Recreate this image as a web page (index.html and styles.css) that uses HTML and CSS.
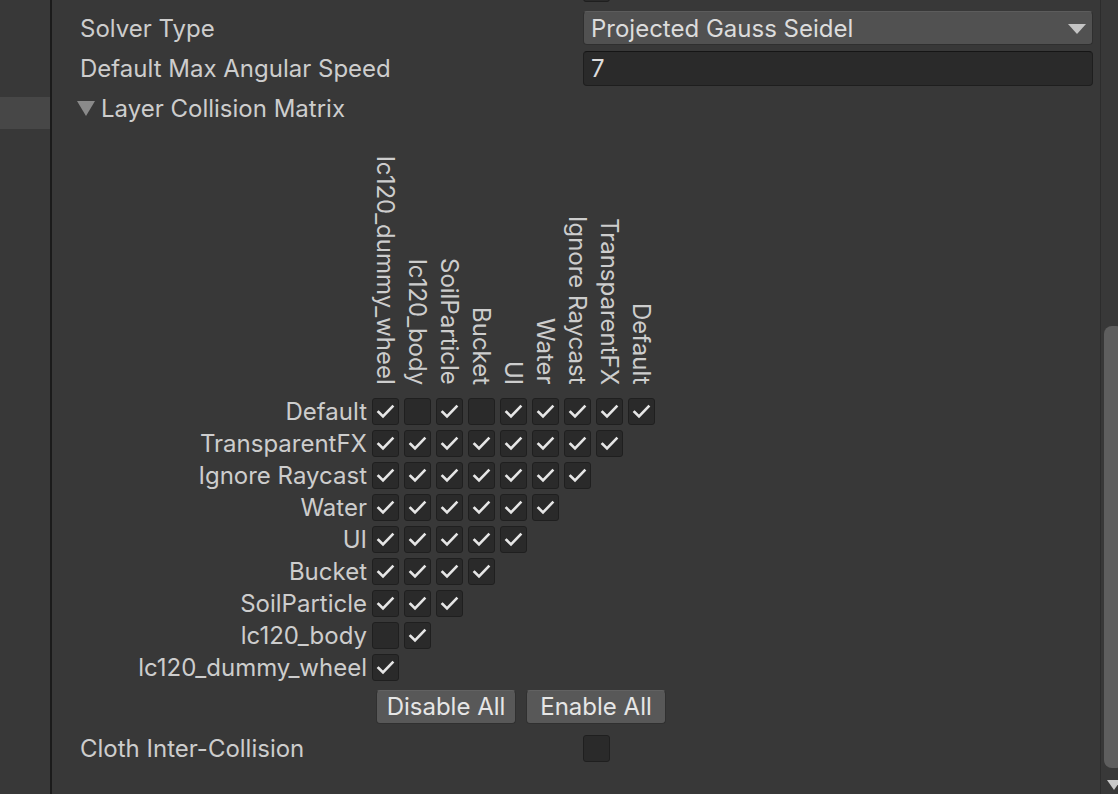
FILE: index.html
```html
<!DOCTYPE html>
<html>
<head>
<meta charset="utf-8">
<link rel="stylesheet" href="styles.css">
</head>
<body>
<div class="app">
  <aside class="sidebar"><div class="side-hl"></div></aside>
  <div class="divider"></div>
  <main class="content">
    <div class="row row-partial"><span class="label"></span><span class="checkbox"></span></div>
    <div class="row"><span class="label">Solver Type</span><div class="dropdown"><span>Projected Gauss Seidel</span><span class="arrow"></span></div></div>
    <div class="row"><span class="label">Default Max Angular Speed</span><div class="textfield">7</div></div>
    <div class="row foldout"><span class="tri"></span><span class="flabel">Layer Collision Matrix</span></div>
    <div class="matrix">
      <div class="mhead">
        <div class="spacer"></div>
        <div class="cols">
          <span class="col">lc120_dummy_wheel</span>
          <span class="col">lc120_body</span>
          <span class="col">SoilParticle</span>
          <span class="col">Bucket</span>
          <span class="col">UI</span>
          <span class="col">Water</span>
          <span class="col">Ignore Raycast</span>
          <span class="col">TransparentFX</span>
          <span class="col">Default</span>
        </div>
      </div>
      <div class="mrow"><span class="rlabel">Default</span><div class="boxes"><span class="cb on"></span><span class="cb"></span><span class="cb on"></span><span class="cb"></span><span class="cb on"></span><span class="cb on"></span><span class="cb on"></span><span class="cb on"></span><span class="cb on"></span></div></div>
      <div class="mrow"><span class="rlabel">TransparentFX</span><div class="boxes"><span class="cb on"></span><span class="cb on"></span><span class="cb on"></span><span class="cb on"></span><span class="cb on"></span><span class="cb on"></span><span class="cb on"></span><span class="cb on"></span></div></div>
      <div class="mrow"><span class="rlabel">Ignore Raycast</span><div class="boxes"><span class="cb on"></span><span class="cb on"></span><span class="cb on"></span><span class="cb on"></span><span class="cb on"></span><span class="cb on"></span><span class="cb on"></span></div></div>
      <div class="mrow"><span class="rlabel">Water</span><div class="boxes"><span class="cb on"></span><span class="cb on"></span><span class="cb on"></span><span class="cb on"></span><span class="cb on"></span><span class="cb on"></span></div></div>
      <div class="mrow"><span class="rlabel">UI</span><div class="boxes"><span class="cb on"></span><span class="cb on"></span><span class="cb on"></span><span class="cb on"></span><span class="cb on"></span></div></div>
      <div class="mrow"><span class="rlabel">Bucket</span><div class="boxes"><span class="cb on"></span><span class="cb on"></span><span class="cb on"></span><span class="cb on"></span></div></div>
      <div class="mrow"><span class="rlabel">SoilParticle</span><div class="boxes"><span class="cb on"></span><span class="cb on"></span><span class="cb on"></span></div></div>
      <div class="mrow"><span class="rlabel">lc120_body</span><div class="boxes"><span class="cb"></span><span class="cb on"></span></div></div>
      <div class="mrow"><span class="rlabel">lc120_dummy_wheel</span><div class="boxes"><span class="cb on"></span></div></div>
      <div class="mbuttons"><button class="btn">Disable All</button><button class="btn">Enable All</button></div>
    </div>
    <div class="row row-cloth"><span class="label">Cloth Inter-Collision</span><span class="checkbox"></span></div>
  </main>
  <div class="scrollbar"><div class="thumb"></div><div class="sarrow"></div></div>
</div>
<script>
document.querySelectorAll('.cb.on').forEach(function(el){
  el.innerHTML = '<svg width="27" height="27" viewBox="0 0 27 27"><polyline points="6.5,14 11,18.5 20.5,8.5" fill="none" stroke="#e6e6e6" stroke-width="2.6" stroke-linecap="square" stroke-linejoin="miter"/></svg>';
});
</script>
</body>
</html>
```
FILE: styles.css
```css
* { box-sizing: border-box; }
html, body {
  margin: 0;
  padding: 0;
  width: 1118px;
  height: 794px;
  overflow: hidden;
  background: #383838;
  font-family: Inter, "Noto Sans", sans-serif;
  font-size: 24px;
  color: #cdcdcd;
}
.app {
  display: flex;
  width: 1118px;
  height: 794px;
  overflow: hidden;
}
.sidebar {
  width: 50px;
  flex: none;
  background: #383838;
  padding-top: 97px;
}
.side-hl {
  height: 32px;
  background: #474747;
}
.divider {
  width: 2px;
  flex: none;
  background: #1b1b1b;
}
.content {
  flex: 1;
  display: flex;
  flex-direction: column;
  padding: 0 7px 0 28px;
}
.row {
  height: 40px;
  display: flex;
  align-items: center;
  flex: none;
}
.row-partial { margin-top: -32px; }
.label {
  width: 503px;
  flex: none;
  white-space: nowrap;
}
.checkbox {
  width: 27px;
  height: 27px;
  background: #2a2a2a;
  border: 1px solid #1f1f1f;
  border-radius: 3px;
}
.dropdown {
  flex: 1;
  height: 34px;
  background: #515151;
  border: 1px solid #2f2f2f;
  border-top-color: #5c5c5c;
  border-radius: 4px;
  display: flex;
  align-items: center;
  justify-content: space-between;
  padding: 0 6px 0 7px;
  color: #dcdcdc;
}
.arrow {
  width: 0;
  height: 0;
  border-left: 9px solid transparent;
  border-right: 9px solid transparent;
  border-top: 10px solid #c4c4c4;
  margin-top: 2px;
}
.textfield {
  flex: 1;
  height: 35px;
  background: #2a2a2a;
  border: 1px solid #1e1e1e;
  border-top-color: #151515;
  border-radius: 4px;
  display: flex;
  align-items: center;
  padding: 0 7px;
  color: #dcdcdc;
}
.tri {
  width: 0;
  height: 0;
  border-left: 9px solid transparent;
  border-right: 9px solid transparent;
  border-top: 15px solid #8a8a8a;
  margin-left: -3px;
  margin-right: 6px;
}
.flabel { white-space: nowrap; }
.matrix {
  display: flex;
  flex-direction: column;
  flex: none;
}
.mhead {
  display: flex;
  height: 270px;
  padding-bottom: 13px;
  align-items: flex-end;
}
.spacer { width: 287px; flex: none; }
.cols {
  display: flex;
  gap: 5px;
  margin-left: 5px;
  align-items: flex-end;
}
.col {
  writing-mode: vertical-rl;
  width: 27px;
  line-height: 27px;
  white-space: nowrap;
  display: block;
  padding-left: 4px;
}
.mrow {
  display: flex;
  align-items: center;
  height: 27px;
  margin-bottom: 5px;
}
.rlabel {
  width: 287px;
  flex: none;
  text-align: right;
  white-space: nowrap;
  line-height: 27px;
}
.boxes {
  display: flex;
  gap: 5px;
  margin-left: 5px;
}
.cb {
  width: 27px;
  height: 27px;
  background: #2a2a2a;
  border: 1px solid #1f1f1f;
  border-radius: 3px;
  position: relative;
  display: block;
}
.cb svg {
  position: absolute;
  left: -1px;
  top: -1px;
}
.mbuttons {
  display: flex;
  gap: 10px;
  margin-left: 296px;
  margin-top: 4px;
}
.btn {
  width: 140px;
  height: 34px;
  background: #585858;
  border: 1px solid #303030;
  border-top-color: #626262;
  border-radius: 4px;
  color: #e6e6e6;
  font-family: Inter, "Noto Sans", sans-serif;
  font-size: 24px;
  padding: 0;
  line-height: 30px;
}
.row-cloth { margin-top: 4px; }
.scrollbar {
  width: 18px;
  flex: none;
  border-left: 1px solid #2c2c2c;
  background: #383838;
  padding-top: 326px;
  padding-left: 3px;
  overflow: hidden;
}
.thumb {
  width: 20px;
  height: 442px;
  background: #5e5e5e;
  border-radius: 8px;
}
.sarrow {
  width: 0;
  height: 0;
  border-left: 7px solid transparent;
  border-right: 7px solid transparent;
  border-top: 10px solid #c8c8c8;
  margin-top: 12px;
  margin-left: 3px;
}
```
